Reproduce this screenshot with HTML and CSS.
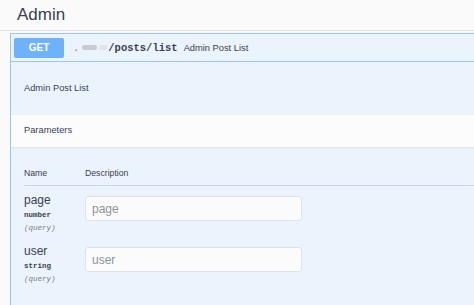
FILE: index.html
```html
<!DOCTYPE html>
<html lang="en">
<head>
  <meta charset="UTF-8" />
  <title>Admin</title>
  <link rel="stylesheet" href="styles.css">
</head>
<body>
  <div class="tag-header">Admin</div>

  <div class="opblock">
    <div class="summary">
      <span class="method">GET</span>
      <span class="path"><span class="host">.<span class="blur wide"></span><span class="blur"></span></span>/posts/list</span>
      <span class="summary-text">Admin Post List</span>
    </div>

    <div class="description">Admin Post List</div>

    <div class="section-bar">Parameters</div>

    <div class="params">
      <div class="params-head">
        <span class="col-name">Name</span>
        <span>Description</span>
      </div>

      <div class="param-row">
        <div class="col-name">
          <div class="param-name">page</div>
          <div class="param-type">number</div>
          <div class="param-in">(query)</div>
        </div>
        <input class="param-input" type="text" placeholder="page">
      </div>

      <div class="param-row">
        <div class="col-name">
          <div class="param-name">user</div>
          <div class="param-type">string</div>
          <div class="param-in">(query)</div>
        </div>
        <input class="param-input" type="text" placeholder="user">
      </div>
    </div>
  </div>
</body>
</html>
```

FILE: styles.css
```css
body {
  margin: 0;
  padding: 0;
  background: #fafafa;
  font-family: "Liberation Sans", Arial, sans-serif;
  color: #3b4151;
  overflow: hidden;
}

.tag-header {
  height: 30px;
  padding-left: 17px;
  font-size: 17px;
  line-height: 29px;
  color: #3b4151;
  border-bottom: 1px solid #e2e2e2;
  margin-bottom: 2px;
}

.opblock {
  margin-left: 10px;
  width: 480px;
  background: #ebf3fc;
  border: 1px solid #9ac7f8;
  border-right: none;
  height: 400px;
}

.summary {
  display: flex;
  align-items: center;
  height: 27px;
  padding-left: 3px;
  border-bottom: 1px solid #9ac7f8;
}

.method {
  width: 50px;
  height: 20px;
  line-height: 20px;
  text-align: center;
  background: #6eb2fb;
  color: #fff;
  font-size: 10px;
  font-weight: bold;
  border-radius: 2px;
}

.path {
  margin-left: 9px;
  font-family: "Liberation Mono", "Courier New", monospace;
  font-weight: bold;
  font-size: 10.5px;
  color: #3b4151;
}

.host {
  display: inline-flex;
  align-items: center;
  gap: 2px;
  margin-right: 1px;
  color: #888;
  font-weight: normal;
}

.blur {
  display: inline-block;
  width: 8px;
  height: 5px;
  background: #e2e4e8;
  border-radius: 2px;
}

.blur.wide {
  width: 15px;
  background: #c8ccd2;
  margin-left: 1px;
}

.summary-text {
  margin-left: 6px;
  font-size: 9.3px;
  color: #3b4151;
}

.description {
  height: 53px;
  line-height: 52px;
  padding-left: 13px;
  font-size: 9.3px;
}

.section-bar {
  height: 32px;
  line-height: 31px;
  padding-left: 13px;
  background: #fcfcfd;
  font-size: 9.3px;
  font-weight: 500;
  box-shadow: 0 1px 2px rgba(0, 0, 0, 0.08);
}

.params {
  padding: 0 0 0 13px;
}

.params-head {
  display: flex;
  height: 39px;
  line-height: 12px;
  padding-top: 20px;
  box-sizing: border-box;
  font-size: 8.7px;
  font-weight: 500;
  border-bottom: 1px solid #c9d5e3;
}

.col-name {
  width: 61px;
  flex-shrink: 0;
}

.param-row {
  display: flex;
  align-items: flex-start;
  padding-top: 7px;
  height: 44px;
}

.param-name {
  font-size: 12px;
  line-height: 14px;
  color: #3b4151;
}

.param-type {
  margin-top: 1.5px;
  font-family: "Liberation Mono", "Courier New", monospace;
  font-size: 7.5px;
  font-weight: bold;
  line-height: 13px;
}

.param-in {
  font-family: "Liberation Mono", "Courier New", monospace;
  font-size: 7.5px;
  font-style: italic;
  line-height: 13px;
  color: #808080;
}

.param-input {
  margin-top: 3px;
  width: 217px;
  height: 25px;
  box-sizing: border-box;
  padding: 0 6px;
  border: 1px solid #dfe3e8;
  border-radius: 3px;
  background: #fbfbfc;
  font-family: "Liberation Sans", Arial, sans-serif;
  font-size: 12px;
  color: #3b4151;
  outline: none;
}

.param-input::placeholder {
  color: #8f939a;
}
```
